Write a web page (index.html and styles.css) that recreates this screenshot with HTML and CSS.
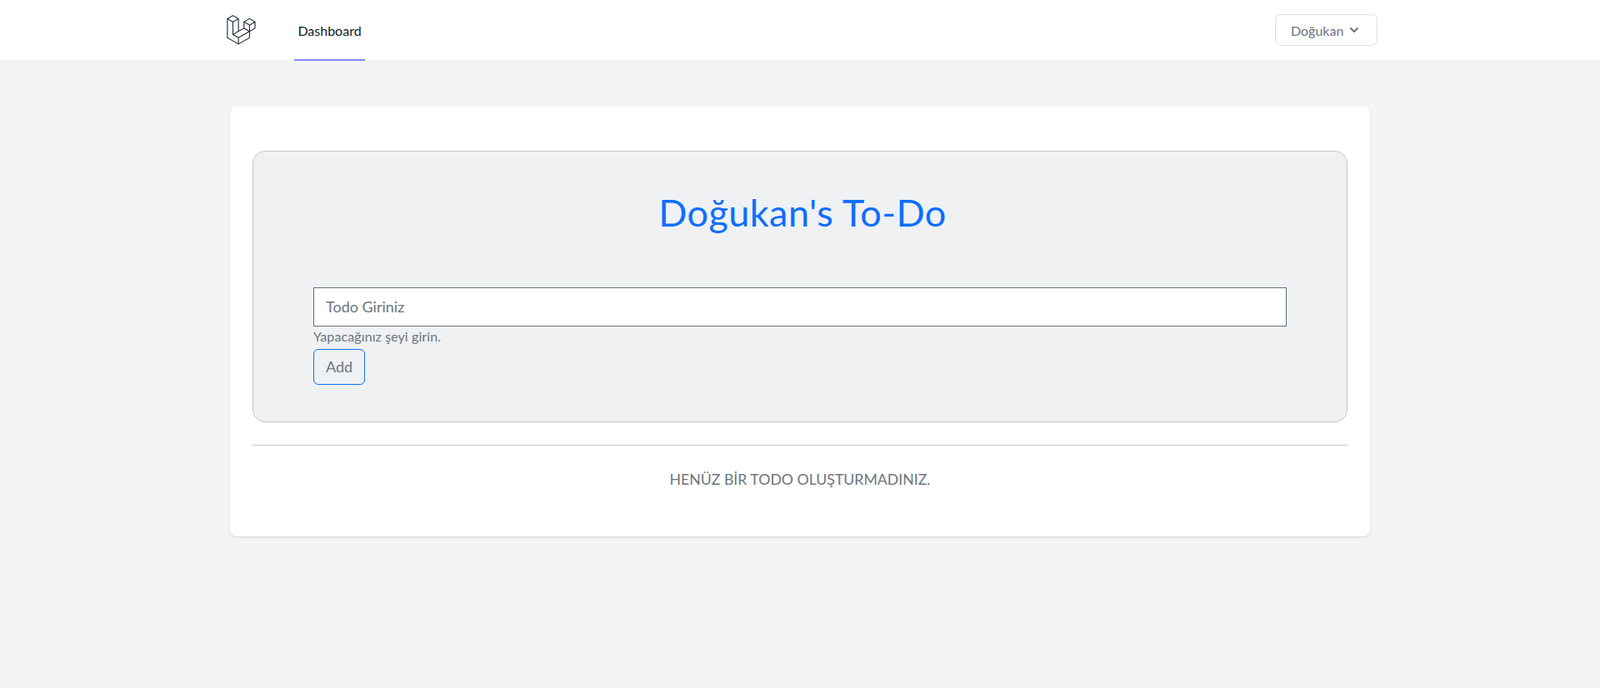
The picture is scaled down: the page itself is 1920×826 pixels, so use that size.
FILE: index.html
```html
<!DOCTYPE html>
<html lang="en">
<head>
    <meta charset="UTF-8">
    <meta name="viewport" content="width=device-width, initial-scale=1.0">
    <title>Dashboard</title>
    <link rel="stylesheet" href="styles.css">
</head>
<body>
    <nav class="navbar">
        <div class="nav-inner">
            <div class="nav-left">
                <a class="logo" href="#">
                    <svg viewBox="0 0 62 65" fill="currentColor" xmlns="http://www.w3.org/2000/svg">
                        <path d="M61.8548 14.6253C61.8778 14.7102 61.8895 14.7978 61.8897 14.8858V28.5615C61.8898 28.737 61.8434 28.9095 61.7554 29.0614C61.6675 29.2132 61.5409 29.3392 61.3887 29.4265L49.9104 36.0351V49.1337C49.9104 49.4902 49.7209 49.8192 49.4118 49.9987L25.4519 63.7916C25.3971 63.8227 25.3372 63.8427 25.2774 63.8639C25.255 63.8714 25.2338 63.8851 25.2101 63.8913C25.0426 63.9354 24.8666 63.9354 24.6991 63.8913C24.6716 63.8838 24.6467 63.8689 24.6205 63.8589C24.5657 63.8389 24.5084 63.8215 24.456 63.7916L0.501061 49.9987C0.348882 49.9113 0.222437 49.7853 0.134469 49.6334C0.0465019 49.4816 0.000120578 49.3092 0 49.1337L0 8.10652C0 8.01678 0.0124642 7.92953 0.0348998 7.84477C0.0423783 7.8161 0.0598282 7.78993 0.0697995 7.76126C0.0884958 7.70891 0.105946 7.65531 0.133367 7.6067C0.152063 7.5743 0.179485 7.54812 0.20192 7.51821C0.230588 7.47832 0.256763 7.43719 0.290416 7.40229C0.319084 7.37362 0.356476 7.35243 0.388883 7.32751C0.425029 7.29759 0.457436 7.26518 0.498568 7.2415L12.4779 0.345059C12.6296 0.257786 12.8015 0.211853 12.9765 0.211853C13.1515 0.211853 13.3234 0.257786 13.475 0.345059L25.4531 7.2415H25.4556C25.4955 7.26643 25.5292 7.29759 25.5653 7.32626C25.5977 7.35119 25.6339 7.37362 25.6625 7.40104C25.6974 7.43719 25.7224 7.47832 25.7523 7.51821C25.7735 7.54812 25.8021 7.5743 25.8196 7.6067C25.8483 7.65656 25.8645 7.70891 25.8844 7.76126C25.8944 7.78993 25.9118 7.8161 25.9193 7.84602C25.9423 7.93096 25.954 8.01853 25.9542 8.10652V33.7317L35.9355 27.9844V14.8846C35.9355 14.7973 35.948 14.7088 35.9704 14.6253C35.9792 14.5954 35.9954 14.5692 36.0053 14.5405C36.0253 14.4882 36.0427 14.4346 36.0702 14.386C36.0888 14.3536 36.1163 14.3274 36.1375 14.2975C36.1674 14.2576 36.1923 14.2165 36.2272 14.1816C36.2559 14.1529 36.292 14.1317 36.3244 14.1068C36.3618 14.0769 36.3942 14.0445 36.4341 14.0208L48.4147 7.12434C48.5663 7.03694 48.7383 6.99094 48.9133 6.99094C49.0883 6.99094 49.2602 7.03694 49.4118 7.12434L61.3899 14.0208C61.4323 14.0457 61.4647 14.0769 61.5021 14.1055C61.5333 14.1305 61.5694 14.1529 61.5981 14.1803C61.633 14.2165 61.6579 14.2576 61.6878 14.2975C61.7103 14.3274 61.7377 14.3536 61.7551 14.386C61.7838 14.4346 61.8 14.4882 61.8199 14.5405C61.8312 14.5692 61.8474 14.5954 61.8548 14.6253ZM59.893 27.9844V16.6121L55.7013 19.0252L49.9104 22.3593V33.7317L59.8942 27.9844H59.893ZM47.9149 48.5566V37.1768L42.2187 40.4299L25.953 49.7133V61.2003L47.9149 48.5566ZM1.99677 9.83281V48.5566L23.9562 61.199V49.7145L12.4841 43.2219L12.4804 43.2194L12.4754 43.2169C12.4368 43.1945 12.4044 43.1621 12.3682 43.1347C12.3371 43.1097 12.3009 43.0898 12.2735 43.0624L12.271 43.0586C12.2386 43.0275 12.2162 42.9888 12.1887 42.9539C12.1638 42.9203 12.1339 42.8916 12.114 42.8567L12.1127 42.853C12.0903 42.8156 12.0766 42.7707 12.0604 42.7283C12.0442 42.6909 12.023 42.656 12.013 42.6161C12.0005 42.5688 11.998 42.5177 11.9931 42.4691C11.9881 42.4317 11.9781 42.3955 11.9781 42.3581V15.5809L6.18848 12.2456L1.99677 9.83281ZM12.9777 2.36177L2.99764 8.10652L12.9752 13.8513L22.9541 8.10527L12.9752 2.36177H12.9777ZM18.1678 38.2138L23.9574 34.8809V9.83281L19.7657 12.2469L13.9749 15.5809V40.6286L18.1678 38.2138ZM48.9133 9.14105L38.9344 14.8858L48.9133 20.6305L58.8909 14.8846L48.9133 9.14105ZM47.9149 22.3593L42.124 19.0252L37.9323 16.6121V27.9844L43.7219 31.3174L47.9149 33.7317V22.3593ZM24.9533 47.987L39.59 39.631L46.9065 35.4555L36.9352 29.7145L25.4544 36.3242L14.9907 42.3482L24.9533 47.987Z"/>
                    </svg>
                </a>
                <a class="nav-link active" href="#">Dashboard</a>
            </div>
            <button class="user-btn" type="button">
                Doğukan
                <svg class="chevron" viewBox="0 0 20 20" fill="currentColor" xmlns="http://www.w3.org/2000/svg">
                    <path fill-rule="evenodd" clip-rule="evenodd" d="M5.293 7.293a1 1 0 011.414 0L10 10.586l3.293-3.293a1 1 0 111.414 1.414l-4 4a1 1 0 01-1.414 0l-4-4a1 1 0 010-1.414z"/>
                </svg>
            </button>
        </div>
    </nav>

    <main class="content">
        <div class="card">
            <section class="todo-panel">
                <h1>Doğukan's To-Do</h1>
                <form class="todo-form">
                    <input type="text" placeholder="Todo Giriniz">
                    <div class="form-text">Yapacağınız şeyi girin.</div>
                    <button type="submit" class="add-btn">Add</button>
                </form>
            </section>
            <hr class="divider">
            <p class="empty">HENÜZ BİR TODO OLUŞTURMADINIZ.</p>
        </div>
    </main>
</body>
</html>
```

FILE: styles.css
```css
* {
    box-sizing: border-box;
}
body {
    margin: 0;
    min-height: 826px;
    font-family: Lato, Inter, sans-serif;
    background-color: #f3f4f6;
}
a {
    text-decoration: none;
}
.navbar {
    height: 72px;
    background-color: white;
}
.nav-inner {
    width: 1386px;
    height: 100%;
    margin: 0 auto;
    padding-left: 5px;
    display: flex;
    align-items: center;
    justify-content: space-between;
}
.nav-left {
    display: flex;
    align-items: center;
    height: 100%;
}
.logo {
    display: block;
    width: 35px;
    height: 36px;
    color: #1f2937;
}
.logo svg {
    display: block;
    width: 100%;
    height: 100%;
}
.nav-link {
    display: flex;
    align-items: center;
    justify-content: center;
    align-self: flex-start;
    width: 85px;
    height: 73px;
    margin-left: 46px;
    padding-top: 1px;
    font-size: 16px;
    color: #111827;
    border-bottom: 2px solid #818cf8;
}
.user-btn {
    display: flex;
    align-items: center;
    gap: 3px;
    width: 123px;
    height: 38px;
    padding: 0 14px 0 18px;
    font-family: inherit;
    font-size: 16px;
    color: #6b7280;
    background-color: white;
    border: 1px solid #e0e1e7;
    border-radius: 7px;
}
.chevron {
    flex-shrink: 0;
    width: 20px;
    height: 20px;
}
.content {
    padding-top: 55px;
}
.card {
    width: 1368px;
    height: 517px;
    margin: 0 auto;
    padding: 54px 27px 0;
    background-color: white;
    border-radius: 8px;
    box-shadow: 0 1px 3px rgba(0,0,0,0.1), 0 1px 2px rgba(0,0,0,0.06);
}
.todo-panel {
    height: 326px;
    padding: 47px 72px 0;
    background-color: #eff1f3;
    border: 1px solid #c4c5c6;
    border-radius: 15px;
}
h1 {
    margin: 0 0 64px;
    padding-left: 6px;
    font-size: 45px;
    font-weight: 400;
    line-height: 52px;
    letter-spacing: 0.45px;
    text-align: center;
    color: #0d6efd;
}
.todo-form input {
    display: block;
    width: 100%;
    height: 47px;
    padding: 0 14px 2px;
    font-family: inherit;
    font-size: 18px;
    color: #212529;
    background-color: white;
    border: 1px solid #64707f;
    border-radius: 0;
}
.todo-form input::placeholder {
    color: #6c757d;
}
.form-text {
    margin-top: 1px;
    font-size: 16px;
    line-height: 21px;
    letter-spacing: 0.1px;
    color: #6c757d;
}
.add-btn {
    display: block;
    width: 62px;
    height: 43px;
    padding: 0 0 2px;
    margin-top: 5px;
    font-family: inherit;
    font-size: 18px;
    color: #6c757d;
    background: transparent;
    border: 1px solid #0d6efd;
    border-radius: 6px;
}
.divider {
    height: 1px;
    margin: 27px 0 0;
    background-color: #c8c9cb;
    border: none;
}
.empty {
    margin: 30px 0 0;
    font-size: 17.7px;
    line-height: 22px;
    text-align: center;
    color: #6c757d;
}
```
